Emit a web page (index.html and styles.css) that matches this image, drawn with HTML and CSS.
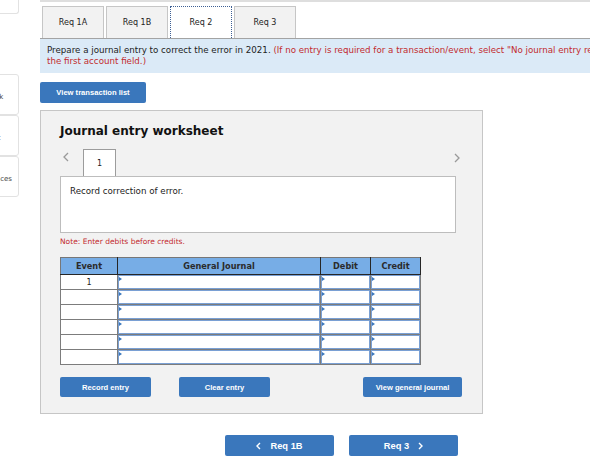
FILE: index.html
```html
<!DOCTYPE html>
<html>
<head>
<meta charset="utf-8">
<link rel="stylesheet" href="styles.css">
</head>
<body>
<div class="page">
  <aside class="sidebar">
    <div class="side-box side-top"></div>
    <div class="side-box side-first"><span>eBook</span></div>
    <div class="side-box"><span>Print</span></div>
    <div class="side-box"><span>References</span></div>
  </aside>
  <main class="main">
    <div class="tabs">
      <div class="tab">Req 1A</div>
      <div class="tab">Req 1B</div>
      <div class="tab active">Req 2</div>
      <div class="tab">Req 3</div>
    </div>
    <div class="info">Prepare a journal entry to correct the error in 2021. <span class="red">(If no entry is required for a transaction/event, select "No journal entry required" in the first account field.)</span></div>
    <button class="btn btn-view">View transaction list</button>
    <section class="worksheet">
      <h2 class="ws-title">Journal entry worksheet</h2>
      <div class="ws-nav">
        <span class="chev chev-left"><svg width="6" height="10" viewBox="0 0 6 10"><polyline points="5,1 1,5 5,9" fill="none" stroke="#9a9a9a" stroke-width="1.3"/></svg></span>
        <div class="ws-tab">1</div>
        <span class="chev chev-right"><svg width="6" height="10" viewBox="0 0 6 10"><polyline points="1,1 5,5 1,9" fill="none" stroke="#9a9a9a" stroke-width="1.3"/></svg></span>
      </div>
      <div class="record-box">Record correction of error.</div>
      <div class="note">Note: Enter debits before credits.</div>
      <table class="journal">
        <thead>
          <tr><th class="c-event">Event</th><th class="c-gj">General Journal</th><th class="c-amt">Debit</th><th class="c-amt">Credit</th></tr>
        </thead>
        <tbody>
          <tr><td class="ev">1</td><td><div class="inp"></div></td><td><div class="inp"></div></td><td><div class="inp"></div></td></tr>
          <tr><td class="ev"></td><td><div class="inp"></div></td><td><div class="inp"></div></td><td><div class="inp"></div></td></tr>
          <tr><td class="ev"></td><td><div class="inp"></div></td><td><div class="inp"></div></td><td><div class="inp"></div></td></tr>
          <tr><td class="ev"></td><td><div class="inp"></div></td><td><div class="inp"></div></td><td><div class="inp"></div></td></tr>
          <tr><td class="ev"></td><td><div class="inp"></div></td><td><div class="inp"></div></td><td><div class="inp"></div></td></tr>
          <tr><td class="ev"></td><td><div class="inp"></div></td><td><div class="inp"></div></td><td><div class="inp"></div></td></tr>
        </tbody>
      </table>
      <div class="ws-actions">
        <button class="btn btn-act">Record entry</button>
        <button class="btn btn-act btn-clear">Clear entry</button>
        <button class="btn btn-act btn-gj">View general journal</button>
      </div>
    </section>
    <nav class="bottom-nav">
      <button class="btn btn-nav"><svg width="5" height="8" viewBox="0 0 5 8"><polyline points="4,1 1,4 4,7" fill="none" stroke="#fff" stroke-width="1.4"/></svg><span>Req 1B</span></button>
      <button class="btn btn-nav"><span>Req 3</span><svg width="5" height="8" viewBox="0 0 5 8"><polyline points="1,1 4,4 1,7" fill="none" stroke="#fff" stroke-width="1.4"/></svg></button>
    </nav>
  </main>
</div>
</body>
</html>
```

FILE: styles.css
```css
html, body {
  margin: 0;
  padding: 0;
  background: #ffffff;
}
body {
  width: 590px;
  height: 466px;
  overflow: hidden;
  font-family: "DejaVu Sans", Verdana, sans-serif;
  color: #222;
}
.page {
  display: flex;
  gap: 20px;
}
.sidebar {
  width: 20px;
  flex-shrink: 0;
  display: flex;
  flex-direction: column;
  overflow: hidden;
}
.side-box {
  width: 53px;
  height: 41px;
  margin-left: -34px;
  box-sizing: border-box;
  border: 1px solid #e2e2e2;
  border-radius: 3px;
  background: #fff;
  display: flex;
  align-items: flex-end;
  justify-content: center;
  padding: 0 0 13px 0;
  font-size: 7px;
  line-height: 8px;
  color: #444;
  white-space: nowrap;
}
.side-top {
  height: 6px;
  border-top: none;
  border-radius: 0 0 3px 3px;
}
.side-first {
  margin-top: 60px;
}
.main {
  width: 614px;
  flex-shrink: 0;
  border-top: 2px solid #dedede;
}
.tabs {
  margin-top: 4px;
  padding-left: 2px;
  display: flex;
  gap: 2px;
  height: 32px;
  border-bottom: 1px solid #a3a3a3;
}
.tab {
  width: 62px;
  box-sizing: border-box;
  border: 1px solid #c6c6c6;
  border-bottom: none;
  background: #f2f2f2;
  display: flex;
  align-items: center;
  justify-content: center;
  font-size: 8px;
  color: #222;
}
.tab.active {
  background: #fff;
  border: 1px dotted #3d5f94;
  border-bottom: none;
}
.info {
  background: #dbeaf7;
  padding: 6px 4px 6px 7px;
  font-size: 8.7px;
  line-height: 11px;
  color: #222;
}
.red {
  color: #c22a2e;
}
.btn {
  border: none;
  border-radius: 2px;
  background: #3a77bc;
  color: #fff;
  font-family: "Liberation Sans", Arial, sans-serif;
  font-weight: bold;
  font-size: 7.6px;
  padding: 0;
  display: flex;
  align-items: center;
  justify-content: center;
}
.btn-view {
  margin-top: 9px;
  width: 106px;
  height: 21px;
}
.worksheet {
  margin-top: 7px;
  width: 443px;
  box-sizing: border-box;
  border: 1px solid #c6c6c6;
  background: #f2f2f2;
  padding: 13px 20px 16px 19px;
}
.ws-title {
  margin: 0;
  font-size: 12px;
  line-height: 14px;
  font-weight: bold;
  color: #111;
}
.ws-nav {
  margin-top: 11px;
  height: 27px;
  display: flex;
  align-items: flex-start;
}
.chev {
  display: flex;
  padding-top: 3px;
}
.chev-left {
  width: 20px;
  padding-left: 3px;
}
.chev-right {
  margin-left: auto;
  margin-right: 2px;
  padding-top: 4px;
}
.ws-tab {
  width: 33px;
  height: 27px;
  box-sizing: border-box;
  border: 1px solid #9c9c9c;
  border-bottom: none;
  background: #fff;
  display: flex;
  align-items: center;
  justify-content: center;
  font-size: 8px;
  color: #222;
}
.record-box {
  height: 57px;
  margin-right: 6px;
  box-sizing: border-box;
  border: 1px solid #bdbdbd;
  background: #fff;
  padding: 8px 9px;
  font-size: 8.7px;
  line-height: 12px;
  color: #222;
}
.note {
  margin-top: 4px;
  font-size: 7.5px;
  line-height: 10px;
  color: #c22a2e;
}
.journal {
  margin-top: 10px;
  border-collapse: collapse;
  table-layout: fixed;
  width: 356px;
}
.journal th {
  height: 16px;
  padding: 0;
  background: #77ade6;
  border: 1px solid #262626;
  border-top-color: #777;
  font-size: 8.2px;
  font-weight: bold;
  color: #2b2b2b;
  text-align: center;
}
.journal th.c-event {
  border-left-color: #777;
}
.c-event { width: 56px; }
.c-gj { width: 202px; }
.c-amt { width: 49px; }
.journal td {
  height: 14px;
  padding: 0;
  border: 1px solid #7c7c7c;
  background: #fff;
  vertical-align: top;
}
.journal td.ev {
  font-size: 8px;
  text-align: center;
  vertical-align: middle;
  color: #222;
}
.inp {
  position: relative;
  height: 12px;
  border: 1px solid #7aa0d4;
  background: #fff;
}
.inp::before {
  content: "";
  position: absolute;
  left: 0;
  top: 1px;
  border-top: 2px solid transparent;
  border-bottom: 2px solid transparent;
  border-left: 3px solid #3a77bc;
}
.ws-actions {
  margin-top: 12px;
  display: flex;
  gap: 28px;
}
.btn-act {
  width: 91px;
  height: 20px;
}
.btn-gj {
  width: 99px;
  margin-left: auto;
}
.bottom-nav {
  margin-top: 21px;
  width: 603px;
  display: flex;
  justify-content: center;
  gap: 15px;
}
.btn-nav {
  width: 109px;
  height: 21px;
  font-size: 9.3px;
  gap: 9px;
}
.btn-nav svg {
  display: block;
}
```
